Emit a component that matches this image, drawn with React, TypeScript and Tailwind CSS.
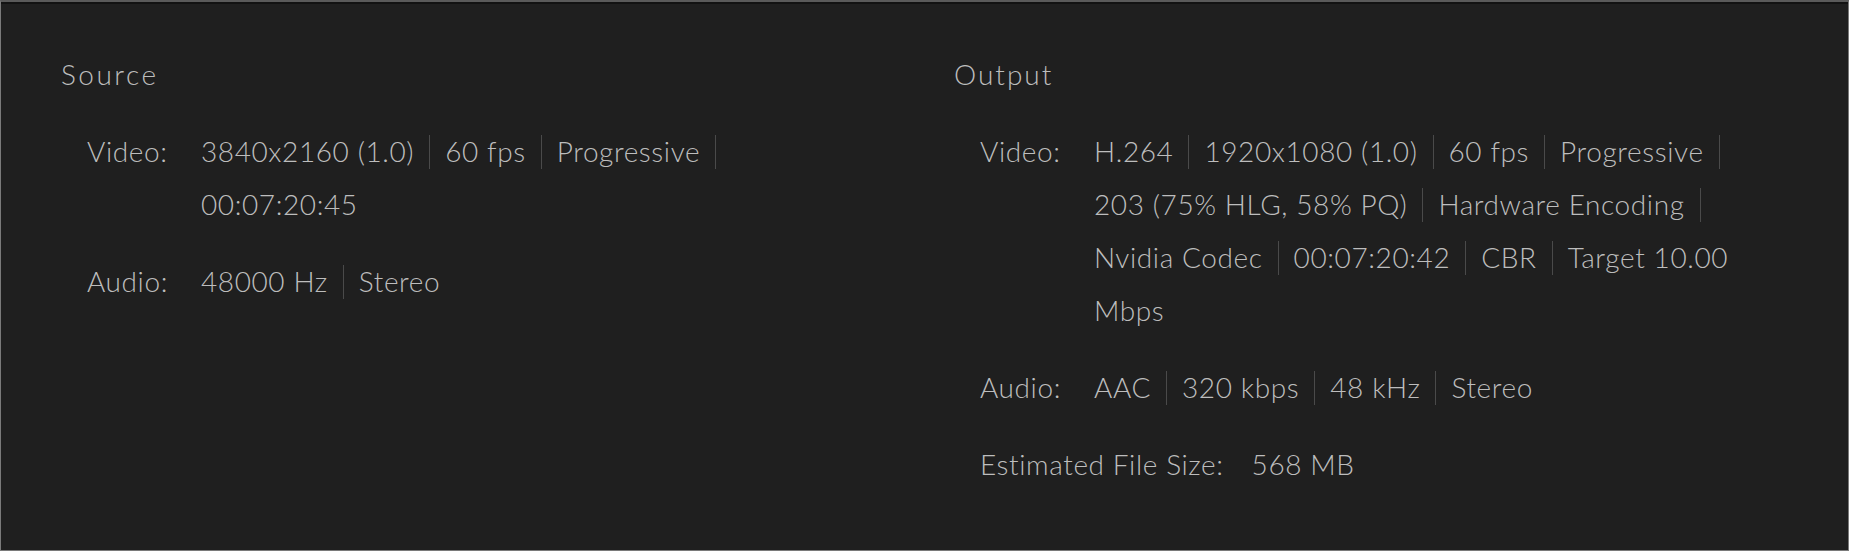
const Sep = () => (
  <span className="inline-block w-px h-[34px] bg-[#4a4a4a] mx-[15px] align-[-7px]" />
);

type Line = { items: string[]; trail?: boolean };

function Values({ lines }: { lines: Line[] }) {
  return (
    <div className="flex flex-col">
      {lines.map((line, i) => (
        <div key={i} className="whitespace-nowrap">
          {line.items.map((item, j) => (
            <span key={j}>
              {j > 0 && <Sep />}
              {item}
            </span>
          ))}
          {line.trail && <Sep />}
        </div>
      ))}
    </div>
  );
}

function Row({ label, lines }: { label: string; lines: Line[] }) {
  return (
    <div className="flex pl-[26px]">
      <div className="w-[114px] shrink-0">{label}</div>
      <Values lines={lines} />
    </div>
  );
}

export default function App() {
  return (
    <div
      className="w-[1849px] h-[551px] box-border bg-[#1f1f1f] border-t-2 border-l border-r border-b border-t-[#5a5a5a] border-l-[#7a7a7a] border-r-[#7a7a7a] border-b-[#7a7a7a] text-[#bdbdbd] text-[28px] leading-[53px] font-light tracking-[0.6px]"
      style={{ fontFamily: "Lato, 'Liberation Sans', sans-serif" }}
    >
      <div className="h-full border-t-2 border-t-[#121212] flex pt-[44px] pl-[60px]">
        <div className="w-[893px] shrink-0 flex flex-col gap-6">
          <div className="tracking-[2.5px]">Source</div>
          <div className="flex flex-col gap-6">
            <Row
              label="Video:"
              lines={[
                { items: ["3840x2160 (1.0)", "60 fps", "Progressive"], trail: true },
                { items: ["00:07:20:45"] },
              ]}
            />
            <Row label="Audio:" lines={[{ items: ["48000 Hz", "Stereo"] }]} />
          </div>
        </div>
        <div className="flex-1 flex flex-col gap-6">
          <div className="tracking-[2px]">Output</div>
          <div className="flex flex-col gap-6">
            <Row
              label="Video:"
              lines={[
                {
                  items: ["H.264", "1920x1080 (1.0)", "60 fps", "Progressive"],
                  trail: true,
                },
                { items: ["203 (75% HLG, 58% PQ)", "Hardware Encoding"], trail: true },
                { items: ["Nvidia Codec", "00:07:20:42", "CBR", "Target 10.00"] },
                { items: ["Mbps"] },
              ]}
            />
            <Row
              label="Audio:"
              lines={[{ items: ["AAC", "320 kbps", "48 kHz", "Stereo"] }]}
            />
            <div className="flex pl-[26px]">
              <span>Estimated File Size:</span>
              <span className="ml-[28px]">568 MB</span>
            </div>
          </div>
        </div>
      </div>
    </div>
  );
}
